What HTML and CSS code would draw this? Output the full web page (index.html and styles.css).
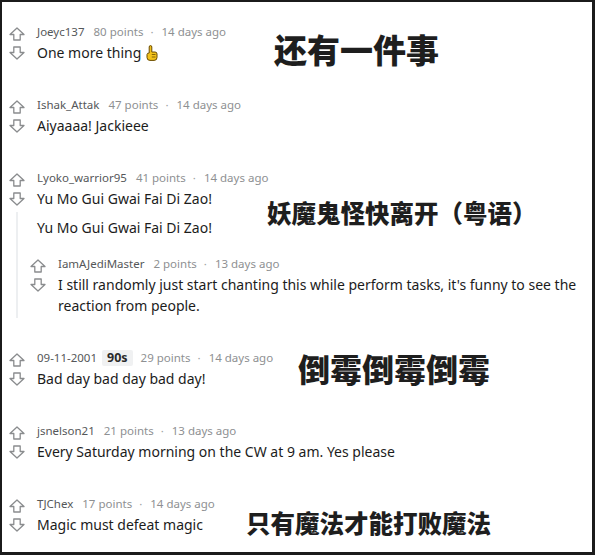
FILE: index.html
```html
<!DOCTYPE html>
<html>
<head>
<meta charset="utf-8">
<link rel="stylesheet" href="styles.css">
</head>
<body>
<div class="frame">

  <div class="comment">
    <div class="votes">
      <svg class="arrow" viewBox="0 0 16 14"><path d="M8 1 L15 7.5 H11.2 V13 H4.8 V7.5 H1 Z"/></svg>
      <svg class="arrow down" viewBox="0 0 16 14"><path d="M8 13 L15 6.5 H11.2 V1 H4.8 V6.5 H1 Z"/></svg>
    </div>
    <div class="content">
      <div class="meta"><span class="user">Joeyc137</span><span class="pts">80 points</span><span class="dot">·</span><span class="pts">14 days ago</span></div>
      <p class="body">One more thing <svg class="hand" viewBox="0 0 12 16"><path d="M3.2 8 V2 Q3.2 0.6 4.5 0.6 Q5.8 0.6 5.8 2 V7 H9 Q11 7 11 9 V12.5 Q11 15.4 8 15.4 H4 Q1 15.4 1 12.5 V9.5 Q1 8 3.2 8 Z"/><path class="crease" d="M5.8 9.5 H9.5 M5.8 12 H9.5"/></svg></p>
    </div>
  </div>

  <div class="comment">
    <div class="votes">
      <svg class="arrow" viewBox="0 0 16 14"><path d="M8 1 L15 7.5 H11.2 V13 H4.8 V7.5 H1 Z"/></svg>
      <svg class="arrow down" viewBox="0 0 16 14"><path d="M8 13 L15 6.5 H11.2 V1 H4.8 V6.5 H1 Z"/></svg>
    </div>
    <div class="content">
      <div class="meta"><span class="user">Ishak_Attak</span><span class="pts">47 points</span><span class="dot">·</span><span class="pts">14 days ago</span></div>
      <p class="body">Aiyaaaa! Jackieee</p>
    </div>
  </div>

  <div class="comment thread">
    <div class="votes narrow">
      <svg class="arrow" viewBox="0 0 16 14"><path d="M8 1 L15 7.5 H11.2 V13 H4.8 V7.5 H1 Z"/></svg>
      <svg class="arrow down" viewBox="0 0 16 14"><path d="M8 13 L15 6.5 H11.2 V1 H4.8 V6.5 H1 Z"/></svg>
      <div class="thread-line"></div>
    </div>
    <div class="thread-body">
      <div class="content inset">
        <div class="meta"><span class="user">Lyoko_warrior95</span><span class="pts">41 points</span><span class="dot">·</span><span class="pts">14 days ago</span></div>
        <p class="body">Yu Mo Gui Gwai Fai Di Zao!</p>
        <p class="body para">Yu Mo Gui Gwai Fai Di Zao!</p>
      </div>
      <div class="comment reply">
        <div class="votes">
          <svg class="arrow" viewBox="0 0 16 14"><path d="M8 1 L15 7.5 H11.2 V13 H4.8 V7.5 H1 Z"/></svg>
          <svg class="arrow down" viewBox="0 0 16 14"><path d="M8 13 L15 6.5 H11.2 V1 H4.8 V6.5 H1 Z"/></svg>
        </div>
        <div class="content">
          <div class="meta"><span class="user">IamAJediMaster</span><span class="pts">2 points</span><span class="dot">·</span><span class="pts">13 days ago</span></div>
          <p class="body">I still randomly just start chanting this while perform tasks, it's funny to see the reaction from people.</p>
        </div>
      </div>
    </div>
  </div>

  <div class="comment">
    <div class="votes">
      <svg class="arrow" viewBox="0 0 16 14"><path d="M8 1 L15 7.5 H11.2 V13 H4.8 V7.5 H1 Z"/></svg>
      <svg class="arrow down" viewBox="0 0 16 14"><path d="M8 13 L15 6.5 H11.2 V1 H4.8 V6.5 H1 Z"/></svg>
    </div>
    <div class="content">
      <div class="meta"><span class="user">09-11-2001</span><span class="flair">90s</span><span class="pts">29 points</span><span class="dot">·</span><span class="pts">14 days ago</span></div>
      <p class="body">Bad day bad day bad day!</p>
    </div>
  </div>

  <div class="comment">
    <div class="votes">
      <svg class="arrow" viewBox="0 0 16 14"><path d="M8 1 L15 7.5 H11.2 V13 H4.8 V7.5 H1 Z"/></svg>
      <svg class="arrow down" viewBox="0 0 16 14"><path d="M8 13 L15 6.5 H11.2 V1 H4.8 V6.5 H1 Z"/></svg>
    </div>
    <div class="content">
      <div class="meta"><span class="user">jsnelson21</span><span class="pts">21 points</span><span class="dot">·</span><span class="pts">13 days ago</span></div>
      <p class="body">Every Saturday morning on the CW at 9 am. Yes please</p>
    </div>
  </div>

  <div class="comment">
    <div class="votes">
      <svg class="arrow" viewBox="0 0 16 14"><path d="M8 1 L15 7.5 H11.2 V13 H4.8 V7.5 H1 Z"/></svg>
      <svg class="arrow down" viewBox="0 0 16 14"><path d="M8 13 L15 6.5 H11.2 V1 H4.8 V6.5 H1 Z"/></svg>
    </div>
    <div class="content">
      <div class="meta"><span class="user">TJChex</span><span class="pts">17 points</span><span class="dot">·</span><span class="pts">14 days ago</span></div>
      <p class="body">Magic must defeat magic</p>
    </div>
  </div>

  <div class="caption cap1">还有一件事</div>
  <div class="caption cap2">妖魔鬼怪快离开（粤语）</div>
  <div class="caption cap3">倒霉倒霉倒霉</div>
  <div class="caption cap4">只有魔法才能打败魔法</div>
</div>
</body>
</html>
```
FILE: styles.css
```css
html, body {
  margin: 0;
  padding: 0;
  background: #ffffff;
}

.frame {
  position: relative;
  width: 595px;
  height: 555px;
  box-sizing: border-box;
  border-style: solid;
  border-color: #1b1b1b;
  border-width: 2px 3px 3px 2px;
  background: #ffffff;
  padding: 20px 0 0 7px;
  overflow: hidden;
  font-family: "Noto Sans", "Open Sans", sans-serif;
  color: #1c1c1c;
}

.comment {
  display: flex;
  margin-bottom: 32px;
}

.votes {
  width: 28px;
  flex: none;
  display: flex;
  flex-direction: column;
}

.votes.narrow {
  width: 21px;
}

.arrow {
  width: 16px;
  height: 14px;
  margin-top: 5px;
  fill: none;
  stroke: #8a8c8e;
  stroke-width: 1.3;
  stroke-linejoin: round;
}

.arrow.down {
  margin-top: 5px;
}

.thread-line {
  width: 2px;
  flex: 1;
  margin: 6px 0 -2px 7px;
  background: #edeff1;
}

.thread-body {
  flex: 1;
  display: flex;
  flex-direction: column;
}

.content {
  flex: 1;
  min-width: 0;
  padding-right: 14px;
}

.content.inset {
  flex: none;
  padding-left: 7px;
}

.reply {
  margin-top: 16px;
  margin-bottom: 0;
}

.meta {
  display: flex;
  align-items: center;
  height: 20px;
  font-size: 11.5px;
  line-height: 20px;
  color: #8e9092;
}

.user {
  color: #555759;
  margin-right: 9px;
}

.dot {
  margin: 0 8px 0 7px;
  color: #a0a2a4;
}

.flair {
  background: #f0f1f2;
  color: #2a2a2a;
  font-weight: 700;
  font-size: 12.5px;
  height: 16px;
  line-height: 16px;
  padding: 0 5px;
  border-radius: 2px;
  margin: 0 8px 0 -4px;
}

.body {
  margin: 0;
  font-size: 14px;
  line-height: 21px;
  color: #1c1c1c;
}

.body.para {
  margin-top: 8px;
}

.hand {
  width: 12px;
  height: 16px;
  vertical-align: -3px;
  margin-left: 1px;
}

.hand path {
  fill: #f2c21b;
  stroke: #6a4b00;
  stroke-width: 1;
  stroke-linejoin: round;
}

.hand path.crease {
  fill: none;
  stroke-width: 0.8;
}

.caption {
  position: absolute;
  font-family: "Noto Sans CJK SC", "Noto Sans CJK JP", sans-serif;
  font-weight: 900;
  line-height: 1;
  color: #1e1e1e;
  white-space: nowrap;
}

.cap1 {
  left: 272px;
  top: 31px;
  font-size: 33px;
}

.cap2 {
  left: 265px;
  top: 199px;
  font-size: 24.5px;
}

.cap3 {
  left: 296px;
  top: 350px;
  font-size: 32px;
}

.cap4 {
  left: 244px;
  top: 509px;
  font-size: 24.5px;
}
```
